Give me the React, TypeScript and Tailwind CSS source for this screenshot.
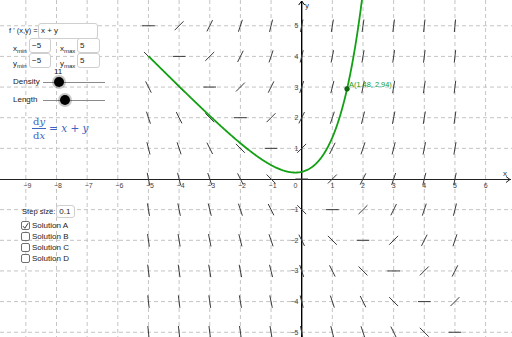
import React from "react";

const ox = 301.7;
const oy = 179;
const s = 30.65;
const X = (x: number) => ox + x * s;
const Y = (y: number) => oy - y * s;

const C = 5.42 / Math.exp(1.48);

function Graph() {
  const vGrid: number[] = [];
  for (let k = -10; k <= 7; k++) if (k !== 0) vGrid.push(k);
  const hGrid: number[] = [];
  for (let k = -6; k <= 6; k++) if (k !== 0) hGrid.push(k);

  const segs: { x1: number; y1: number; x2: number; y2: number; k: string }[] = [];
  const L = 6.3;
  for (let i = -5; i <= 5; i++) {
    for (let j = -5; j <= 5; j++) {
      const m = i + j;
      const n = Math.sqrt(1 + m * m);
      const dx = L / n;
      const dy = (L * m) / n;
      const cx = X(i);
      const cy = Y(j);
      segs.push({ x1: cx - dx, y1: cy + dy, x2: cx + dx, y2: cy - dy, k: `${i},${j}` });
    }
  }

  const pts: string[] = [];
  for (let x = -5; x <= 2.05; x += 0.02) {
    const y = C * Math.exp(x) - x - 1;
    pts.push(`${X(x).toFixed(2)},${Y(y).toFixed(2)}`);
  }

  const xLabels: number[] = [];
  for (let k = -9; k <= 6; k++) if (k !== 0) xLabels.push(k);
  const yLabels: number[] = [];
  for (let k = -5; k <= 5; k++) if (k !== 0) yLabels.push(k);

  const fmt = (k: number) => (k < 0 ? `\u2212${-k}` : `${k}`);

  return (
    <svg width={512} height={337} className="absolute inset-0" fontFamily="Liberation Sans, Arial, sans-serif">
      {vGrid.map((k) => (
        <line key={`v${k}`} x1={X(k)} y1={0} x2={X(k)} y2={337} stroke="#c4c4c4" strokeWidth={1} strokeDasharray="4 3" />
      ))}
      {hGrid.map((k) => (
        <line key={`h${k}`} x1={0} y1={Y(k)} x2={512} y2={Y(k)} stroke="#c4c4c4" strokeWidth={1} strokeDasharray="4 3" />
      ))}
      {/* axes */}
      <line x1={0} y1={oy + 0.5} x2={511} y2={oy + 0.5} stroke="#222" strokeWidth={1} />
      <polyline points={`506,${oy - 2.5} 510,${oy + 0.5} 506,${oy + 3.5}`} fill="none" stroke="#222" strokeWidth={1} />
      <line x1={ox} y1={1} x2={ox} y2={337} stroke="#000" strokeWidth={1.4} />
      <polyline points={`${ox - 3},5 ${ox},1 ${ox + 3},5`} fill="none" stroke="#000" strokeWidth={1} />
      <text x={503} y={176} fontSize={8} fill="#333">x</text>
      <text x={305} y={8} fontSize={8} fill="#333">y</text>

      {xLabels.map((k) => (
        <text key={`xl${k}`} x={X(k) + (k < 0 ? 1.5 : 0)} y={187.5} fontSize={7} fill="#444" textAnchor="middle">
          {fmt(k)}
        </text>
      ))}
      {yLabels.map((k) => (
        <text key={`yl${k}`} x={298.5} y={Y(k) + 2.5} fontSize={7} fill="#444" textAnchor="end">
          {fmt(k)}
        </text>
      ))}
      <text x={295.5} y={187.5} fontSize={7} fill="#444" textAnchor="middle">0</text>

      {segs.map((g) => (
        <line key={g.k} x1={g.x1} y1={g.y1} x2={g.x2} y2={g.y2} stroke="#3a3a3a" strokeWidth={1} />
      ))}

      <polyline points={pts.join(" ")} fill="none" stroke="#14a014" strokeWidth={1.8} />
      <circle cx={X(1.48)} cy={Y(2.94)} r={2.4} fill="#0b6e0b" stroke="#0a4d0a" strokeWidth={0.6} />
      <text x={349} y={87} fontSize={7.4} fill="#179a17">A(1.48, 2.94)</text>
    </svg>
  );
}

function Box({ w, h, children }: { w: string; h?: string; children?: React.ReactNode }) {
  return (
    <div className={`${w} ${h ?? "h-[15px]"} border border-[#cfcfcf] rounded-[3px] bg-white flex items-center pl-[2px] text-[8px] text-[#222]`}>
      {children}
    </div>
  );
}

function Sub({ base, sub }: { base: string; sub: string }) {
  return (
    <span className="text-[8px] text-[#222] leading-none">
      {base}
      <span className="text-[6px] relative top-[2px]">{sub}</span>
    </span>
  );
}

function Slider({ label, knob }: { label: string; knob: string }) {
  return (
    <div className="flex items-center h-[10px]">
      <span className="w-[30px] text-[8px] text-[#222] leading-none">{label}</span>
      <div className="relative w-[62px] h-px bg-[#8a8a8a]">
        <div
          className={`absolute ${knob} top-[-4.5px] w-[10px] h-[10px] rounded-full bg-black shadow-[0_0_0_2px_rgba(0,0,0,0.22)]`}
        />
      </div>
    </div>
  );
}

function Check({ label, checked }: { label: string; checked?: boolean }) {
  return (
    <div className="flex items-center h-[11px]">
      <div className="w-[9px] h-[9px] border border-[#6f6f6f] rounded-[2px] bg-white flex items-center justify-center">
        {checked && (
          <svg width="8" height="8" viewBox="0 0 8 8">
            <path d="M1.2 4.2 L3.2 6.6 L7 0.8" fill="none" stroke="#333" strokeWidth="1.1" />
          </svg>
        )}
      </div>
      <span className="ml-[2px] text-[8px] text-[#222] leading-none">{label}</span>
    </div>
  );
}

export default function App() {
  return (
    <div className="relative w-[512px] h-[337px] bg-white overflow-hidden font-['Liberation_Sans',Arial,sans-serif]">
      <Graph />

      {/* input panel */}
      <div className="absolute left-0 top-[23px] flex flex-col">
        <div className="flex items-center h-[16px]">
          <span className="ml-[9px] w-[29px] text-[7.5px] text-[#222] leading-none whitespace-nowrap">f ' (x,y) =</span>
          <Box w="w-[60px]" h="h-[16px]">x + y</Box>
        </div>
        <div className="flex items-center h-[15px] mt-[-1px]">
          <div className="ml-[13px] w-[16px]"><Sub base="x" sub="min" /></div>
          <Box w="w-[22px]">{"\u22125"}</Box>
          <div className="ml-[9px] w-[17px]"><Sub base="x" sub="max" /></div>
          <Box w="w-[23px]">5</Box>
        </div>
        <div className="flex items-center h-[15px]">
          <div className="ml-[13px] w-[16px]"><Sub base="y" sub="min" /></div>
          <Box w="w-[22px]">{"\u22125"}</Box>
          <div className="ml-[9px] w-[17px]"><Sub base="y" sub="max" /></div>
          <Box w="w-[23px]">5</Box>
        </div>
        <div className="h-[9px] ml-[54px] text-[8px] text-[#222] leading-[8px]">11</div>
        <div className="ml-[13px] flex flex-col">
          <Slider label="Density" knob="left-[11px]" />
          <div className="h-[8px]" />
          <Slider label="Length" knob="left-[17px]" />
        </div>
      </div>

      {/* formula */}
      <div className="absolute left-[32px] top-[116px] flex items-center text-[#3a63c4] font-['DejaVu_Serif','Liberation_Serif',serif]">
        <div className="flex flex-col items-center">
          <span className="text-[10px] leading-[11px] px-[1px]">
            d<i>y</i>
          </span>
          <div className="w-[14px] h-px bg-[#3a63c4] my-[1px]" />
          <span className="text-[10px] leading-[11px] px-[1px]">
            d<i>x</i>
          </span>
        </div>
        <span className="ml-[3px] text-[10.5px] leading-none whitespace-nowrap">
          = <i>x</i> + <i>y</i>
        </span>
      </div>

      {/* solutions panel */}
      <div className="absolute left-[21px] top-[205px] flex flex-col">
        <div className="flex items-center h-[13px]">
          <span className="ml-[1px] mr-[1px] text-[7.6px] text-[#222] leading-none whitespace-nowrap">Step size:</span>
          <Box w="w-[19px]" h="h-[13px]">0.1</Box>
        </div>
        <div className="h-[2px]" />
        <Check label="Solution A" checked />
        <Check label="Solution B" />
        <Check label="Solution C" />
        <Check label="Solution D" />
      </div>
    </div>
  );
}
